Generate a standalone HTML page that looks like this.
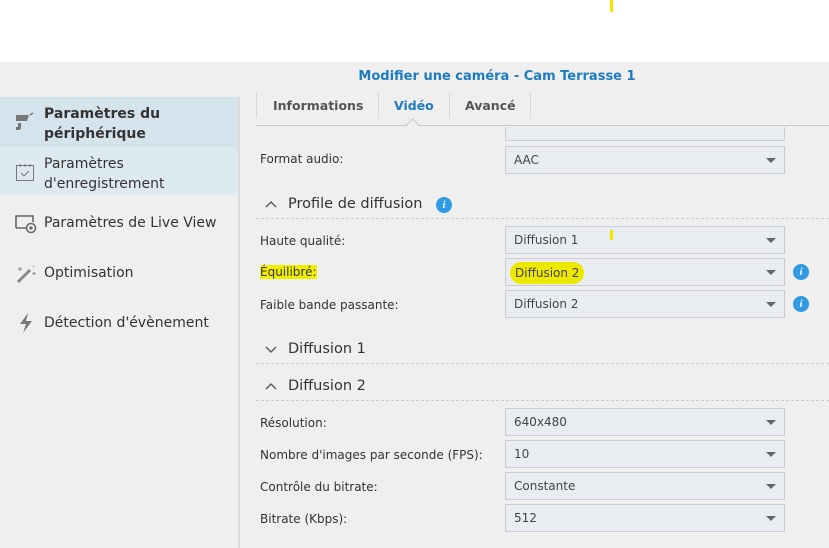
<!DOCTYPE html><html><head><meta charset="utf-8"><style>
body{margin:0;width:829px;height:548px;overflow:hidden;background:#efefef;font-family:"DejaVu Sans","Liberation Sans",sans-serif;color:#333;position:relative}
.a{position:absolute;white-space:nowrap}
.sel{position:absolute;left:505px;width:278px;height:26px;border:1px solid #c9cdd1;background:#e9edf1;font-size:12px;line-height:27px;box-sizing:content-box;color:#444}
.sel span{position:absolute;left:8px}
.sel:after{content:"";position:absolute;right:8px;top:11px;border-left:5px solid transparent;border-right:5px solid transparent;border-top:5px solid #666}
.lbl{position:absolute;left:260px;font-size:12px;color:#333}
.sec{position:absolute;left:288px;font-size:14.5px;color:#333}
.chev{position:absolute;left:265px}
.dash{position:absolute;left:256px;right:0;border-top:1px dashed #ccc}
.info{position:absolute;width:16px;height:16px;border-radius:50%;background:#2f9be2;color:#fff;font:italic bold 11px "Liberation Serif",serif;text-align:center;line-height:16px}
.side{position:absolute;left:44px;font-size:14px;color:#333}
</style></head><body>
<div class="a" style="left:0;top:0;width:829px;height:62px;background:#fff"></div>
<div class="a" style="left:610px;top:0;width:3px;height:12px;background:#f5e600"></div>
<div class="a" style="left:0;width:829px;text-align:center;font-weight:bold;font-size:13px;color:#1d7bbf;top:69px;padding-left:165px;box-sizing:border-box">Modifier une caméra - Cam Terrasse 1</div>
<div class="a" style="left:0;top:97px;width:238px;height:50px;background:#d5e3ec"></div>
<div class="a" style="left:0;top:147px;width:238px;height:48px;background:#deeaf2"></div>
<div class="a" style="left:238px;top:97px;width:2px;height:451px;background:#dcdcdc"></div>
<svg class="a" style="left:14px;top:111px" width="22" height="22"><path d="M2 4h13l-2 6H2z" fill="#777"/><path d="M16 4l3-2" stroke="#777" stroke-width="1.5"/><rect x="4" y="12" width="3" height="6" fill="#777"/><rect x="2" y="16" width="4" height="3" fill="#777"/></svg>
<div class="side" style="top:104px;font-weight:bold;line-height:20px">Paramètres du<br>périphérique</div>
<svg class="a" style="left:15px;top:162px" width="22" height="22"><rect x="1.5" y="3.5" width="17" height="15" fill="none" stroke="#777"/><path d="M5 2v3M10 2v3M15 2v3" stroke="#777"/><path d="M6 11l3 3 5-5" fill="none" stroke="#777"/></svg>
<div class="side" style="top:154px;line-height:20px">Paramètres<br>d'enregistrement</div>
<svg class="a" style="left:14px;top:213px" width="24" height="22"><path d="M2 15V3h17v6M2 15h10" fill="none" stroke="#666" stroke-width="1.6"/><circle cx="17" cy="15" r="4.5" fill="none" stroke="#666" stroke-width="1.5"/><circle cx="17" cy="15" r="1.6" fill="#666"/></svg>
<div class="side" style="top:215px">Paramètres de Live View</div>
<svg class="a" style="left:15px;top:263px" width="24" height="22"><path d="M3 19L15 7" stroke="#888" stroke-width="3"/><path d="M5 4v4M3 6h4M19 9v3M17.5 10.5h3M18 3l1 1" stroke="#888"/></svg>
<div class="side" style="top:265px">Optimisation</div>
<svg class="a" style="left:17px;top:312px" width="20" height="22"><path d="M11 1L3 12h6l-3 9 9-12H9z" fill="#777"/></svg>
<div class="side" style="top:315px">Détection d'évènement</div>
<div class="a" style="left:256px;top:92px;width:1px;height:26px;background:#d8d8d8"></div>
<div class="a" style="left:273px;top:98px;font-size:12.5px;font-weight:bold;color:#555">Informations</div>
<div class="a" style="left:378px;top:92px;width:1px;height:26px;background:#d8d8d8"></div>
<div class="a" style="left:394px;top:98px;font-size:12.5px;font-weight:bold;color:#1d7bbf">Vidéo</div>
<div class="a" style="left:449px;top:92px;width:1px;height:26px;background:#d8d8d8"></div>
<div class="a" style="left:465px;top:98px;font-size:12.5px;font-weight:bold;color:#555">Avancé</div>
<div class="a" style="left:530px;top:92px;width:1px;height:26px;background:#d8d8d8"></div>
<div class="a" style="left:256px;top:125px;width:573px;height:1px;background:#c8c8c8"></div>
<div class="a" style="left:408px;top:120px;width:8px;height:8px;background:#efefef;border-left:1px solid #c8c8c8;border-top:1px solid #c8c8c8;transform:rotate(45deg)"></div>
<div class="a" style="left:505px;top:127px;width:278px;height:13px;border:1px solid #c9cdd1;border-top:none;background:#e9edf1"></div>
<div class="lbl" style="top:152px">Format audio:</div>
<div class="sel" style="top:146px"><span>AAC</span></div>
<svg class="chev" style="top:199px" width="12" height="10"><path d="M1 8l5-5 5 5" fill="none" stroke="#555" stroke-width="1.4"/></svg>
<div class="sec" style="top:196px">Profile de diffusion</div>
<div class="info" style="left:436px;top:197px">i</div>
<div class="dash" style="top:218px"></div>
<div class="lbl" style="top:234px">Haute qualité:</div>
<div class="sel" style="top:226px"><span>Diffusion 1</span></div>
<div class="a" style="left:610px;top:230px;width:3px;height:10px;background:#f5e600"></div>
<div class="lbl" style="top:265px;background:#f2ee00">Équilibré:</div>
<div class="sel" style="top:258px"><span style="left:4px;padding:0 5px;background:#ede800;border-radius:12px;line-height:22px;top:3px">Diffusion 2</span></div>
<div class="info" style="left:793px;top:264px">i</div>
<div class="lbl" style="top:298px">Faible bande passante:</div>
<div class="sel" style="top:290px"><span>Diffusion 2</span></div>
<div class="info" style="left:793px;top:296px">i</div>
<svg class="chev" style="top:344px" width="12" height="10"><path d="M1 3l5 5 5-5" fill="none" stroke="#555" stroke-width="1.4"/></svg>
<div class="sec" style="top:341px">Diffusion 1</div>
<div class="dash" style="top:363px"></div>
<svg class="chev" style="top:381px" width="12" height="10"><path d="M1 8l5-5 5 5" fill="none" stroke="#555" stroke-width="1.4"/></svg>
<div class="sec" style="top:378px">Diffusion 2</div>
<div class="dash" style="top:400px"></div>
<div class="lbl" style="top:416px">Résolution:</div>
<div class="sel" style="top:408px"><span>640x480</span></div>
<div class="lbl" style="top:448px">Nombre d'images par seconde (FPS):</div>
<div class="sel" style="top:440px"><span>10</span></div>
<div class="lbl" style="top:480px">Contrôle du bitrate:</div>
<div class="sel" style="top:472px"><span>Constante</span></div>
<div class="lbl" style="top:512px">Bitrate (Kbps):</div>
<div class="sel" style="top:504px"><span>512</span></div>
</body></html>
